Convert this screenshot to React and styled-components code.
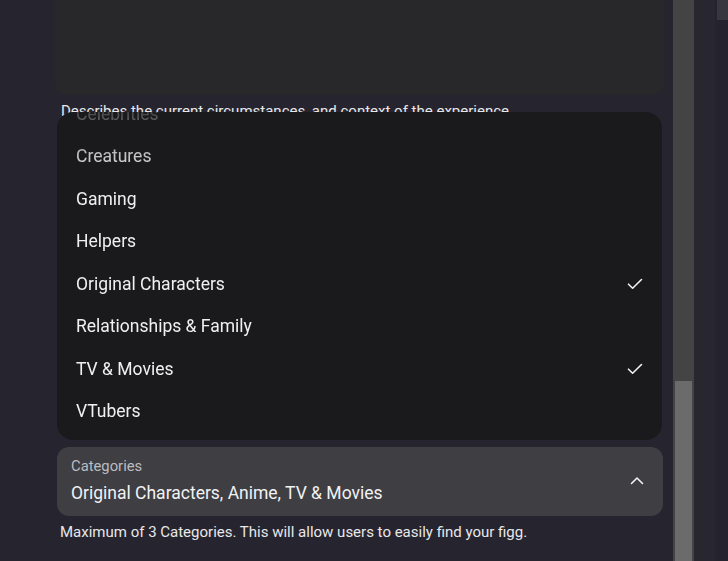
import React from "react";
import styled, { createGlobalStyle } from "styled-components";

const Global = createGlobalStyle`
  html, body { margin: 0; padding: 0; background: #26242e; }
  body { font-family: Roboto, "Noto Sans", Arial, sans-serif; overflow: hidden; }
  * { box-sizing: border-box; }
`;

const Shell = styled.div`
  display: flex;
  width: 728px;
  height: 561px;
  overflow: hidden;
  background: #26242e;
`;

const Main = styled.div`
  width: 673px;
  flex: none;
  padding: 0 10px 0 56px;
  display: flex;
  flex-direction: column;
  overflow: hidden;
`;

const TextArea = styled.div`
  height: 115px;
  margin-top: -20px;
  flex: none;
  background: #28282b;
  border-radius: 12px;
  margin-left: -1px;
  margin-right: -1px;
`;

const Hint = styled.p`
  margin: 6px 0 0 5px;
  font-size: 15px;
  line-height: 20px;
  color: #e8e8ea;
`;

const FieldGroup = styled.div`
  position: relative;
  margin-top: 326px;
  margin-left: 1px;
`;

const Field = styled.div`
  height: 69px;
  background: #3e3e43;
  border-radius: 12px;
  padding: 0 19px 0 14px;
  display: flex;
  align-items: center;
  justify-content: space-between;
`;

const FieldText = styled.div`
  display: flex;
  flex-direction: column;
  margin-top: -2px;
`;

const Label = styled.span`
  font-size: 14.8px;
  line-height: 18px;
  color: #bcbcc1;
`;

const Value = styled.span`
  font-size: 17.5px;
  line-height: 24px;
  margin-top: 6px;
  color: #f2f2f3;
`;

const Chevron = styled.svg`
  margin-top: -2px;
  flex: none;
`;

const Menu = styled.div`
  position: absolute;
  left: 0;
  right: 1px;
  bottom: calc(100% + 7px);
  height: 328px;
  background: #1a1a1c;
  border-radius: 16px;
  overflow: hidden;
  padding: 0 19px 0 19px;
`;

const List = styled.ul`
  list-style: none;
  margin: -19.5px 0 0 0;
  padding: 0;
  -webkit-mask-image: linear-gradient(to bottom, rgba(0,0,0,0.22) 19.5px, rgba(0,0,0,0.8) 63.5px, #000 86px);
  mask-image: linear-gradient(to bottom, rgba(0,0,0,0.22) 19.5px, rgba(0,0,0,0.8) 63.5px, #000 86px);
`;

const Item = styled.li`
  height: 42.5px;
  display: flex;
  align-items: center;
  justify-content: space-between;
  font-size: 17.5px;
  color: #f0f0f1;
`;

const Help = styled.p`
  margin: 5.5px 0 0 4px;
  font-size: 15px;
  line-height: 20px;
  color: #e8e8ea;
`;

const Track = styled.div`
  width: 21px;
  flex: none;
  background: #444444;
  display: flex;
  flex-direction: column;
  justify-content: flex-end;
  align-items: center;
`;

const Thumb = styled.div`
  width: 17px;
  height: 180px;
  background: #6b6b6b;
`;

const Side = styled.div`
  flex: 1;
  display: flex;
  background: #28262f;
  padding-left: 21px;
`;

const SideInner = styled.div`
  flex: 1;
  background: #25232d;
  display: flex;
  justify-content: flex-end;
  align-items: flex-start;
`;

const SideTab = styled.div`
  width: 11px;
  height: 20px;
  background: #38363f;
`;

const Check = () => (
  <svg width="16" height="12" viewBox="0 0 16 12" fill="none">
    <path d="M1.5 6.2 L5.6 10.2 L14.5 1.5" stroke="#f2f2f2" strokeWidth="1.6" strokeLinecap="round" strokeLinejoin="round" />
  </svg>
);

const ChevronUp = () => (
  <Chevron width="14" height="9" viewBox="0 0 14 9" fill="none">
    <path d="M1.5 7.5 L7 2 L12.5 7.5" stroke="#f2f2f2" strokeWidth="1.6" strokeLinecap="round" strokeLinejoin="round" />
  </Chevron>
);

const items = [
  { name: "Celebrities" },
  { name: "Creatures" },
  { name: "Gaming" },
  { name: "Helpers" },
  { name: "Original Characters", checked: true },
  { name: "Relationships & Family" },
  { name: "TV & Movies", checked: true },
  { name: "VTubers" },
];

export default function App() {
  return (
    <Shell>
      <Global />
      <Main>
        <TextArea />
        <Hint>Describes the current circumstances, and context of the experience.</Hint>
        <FieldGroup>
          <Menu>
            <List>
              {items.map((it) => (
                <Item key={it.name}>
                  <span>{it.name}</span>
                  {it.checked && <Check />}
                </Item>
              ))}
            </List>
          </Menu>
          <Field>
            <FieldText>
              <Label>Categories</Label>
              <Value>Original Characters, Anime, TV &amp; Movies</Value>
            </FieldText>
            <ChevronUp />
          </Field>
        </FieldGroup>
        <Help>Maximum of 3 Categories. This will allow users to easily find your figg.</Help>
      </Main>
      <Track>
        <Thumb />
      </Track>
      <Side>
        <SideInner>
          <SideTab />
        </SideInner>
      </Side>
    </Shell>
  );
}
